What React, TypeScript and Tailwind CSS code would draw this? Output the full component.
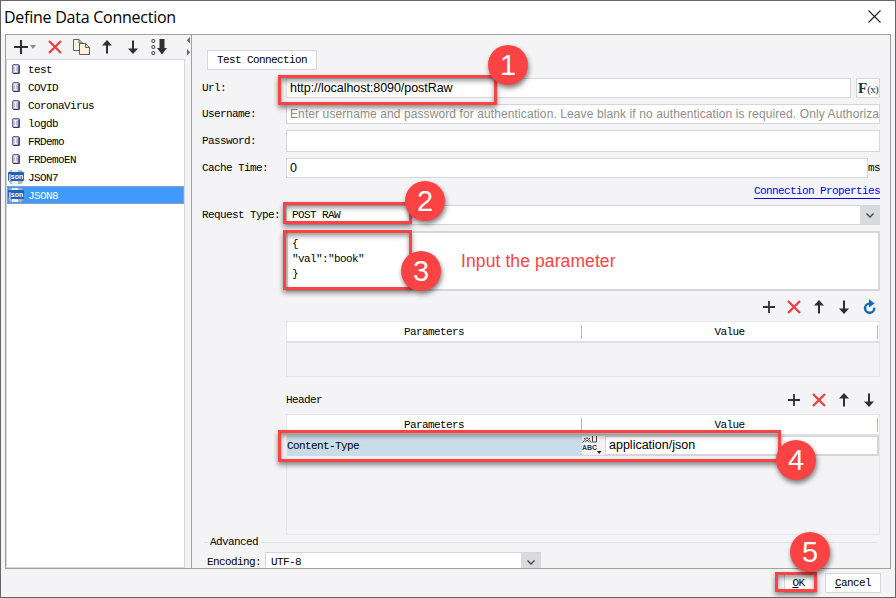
import React from 'react';
import clsx from 'clsx';

const MONO = "font-['Liberation_Mono','Noto_Sans_CJK_SC',monospace] text-[11px] tracking-[-0.6px]";
const ARIAL = "font-['Liberation_Sans',Arial,sans-serif]";

const connections = [
  { name: 'test', type: 'db' },
  { name: 'COVID', type: 'db' },
  { name: 'CoronaVirus', type: 'db' },
  { name: 'logdb', type: 'db' },
  { name: 'FRDemo', type: 'db' },
  { name: 'FRDemoEN', type: 'db' },
  { name: 'JSON7', type: 'json' },
  { name: 'JSON8', type: 'json' }
];

/* Icons */

function PlusIcon({ size = 12 }: { size?: number }) {
  return (
    <svg width={size} height={size} viewBox="0 0 12 12" className="shrink-0">
      <path d="M6 0V12M0 6H12" stroke="#303030" strokeWidth="1.8" />
    </svg>
  );
}

function DeleteIcon() {
  return (
    <svg width="14" height="14" viewBox="0 0 14 14" className="shrink-0">
      <path d="M1 1L13 13M13 1L1 13" stroke="#e8403c" strokeWidth="2.3" />
    </svg>
  );
}

function ArrowIcon({ down = false }: { down?: boolean }) {
  return (
    <svg width="10" height="14" viewBox="0 0 10 14" className={clsx('shrink-0', down && 'rotate-180')}>
      <path d="M5 3V13.5" stroke="#303030" strokeWidth="2" />
      <path d="M5 0L10 5.6H0Z" fill="#303030" />
    </svg>
  );
}

function CopyIcon() {
  return (
    <svg width="17" height="16" viewBox="0 0 17 16" className="shrink-0">
      <path d="M.5 .5H6L9.5 4V11.5H.5Z" fill="#f8f3e4" stroke="#5c5c58" />
      <path d="M6.5 4.5H12.5L16.5 8.5V15.5H6.5Z" fill="#fdf3dc" stroke="#5c5c58" />
      <path d="M12.5 4.5V8.5H16.5M6 .5V4H9.5" fill="none" stroke="#5c5c58" />
    </svg>
  );
}

function SortIcon() {
  return (
    <svg width="16" height="16" viewBox="0 0 16 16" className="shrink-0">
      <g fill="none" stroke="#505050" strokeWidth="1.1">
        <circle cx="2.3" cy="2" r="1.5" />
        <circle cx="2.3" cy="8" r="1.5" />
        <circle cx="2.3" cy="14" r="1.5" />
      </g>
      <path d="M8.5 0H13.5V9H16L11 15.5L6 9H8.5Z" fill="#303030" />
    </svg>
  );
}

function RefreshIcon() {
  return (
    <svg width="13" height="15" viewBox="0 0 13 15" className="shrink-0">
      <path d="M7 4.6H6A4.6 4.6 0 1 0 11.2 8.6" fill="none" stroke="#1369b5" strokeWidth="2.4" />
      <path d="M6 0L11.5 4.4L6 8.6Z" fill="#1369b5" />
    </svg>
  );
}

function DbIcon() {
  return (
    <svg width="8" height="10" viewBox="0 0 8 10">
      <rect x=".5" y=".5" width="7" height="9" rx="1.5" fill="#b9bbd8" stroke="#6c6d8c" />
      <path d="M2 2.5H5M2 7.5H5M3.5 2.5V7.5" stroke="#f4f4ff" />
      <path d="M7 1.5V9.5H1.5" fill="none" stroke="#35365a" strokeWidth="1.2" />
    </svg>
  );
}

function JsonIcon() {
  return (
    <svg width="16" height="16" viewBox="0 0 16 16" className="overflow-visible">
      <rect x="1" y="1" width="14" height="14" rx="3" fill="#b4b6b8" />
      <rect x="4" y="1" width="6" height="14" fill="#eceded" />
      <rect x="0" y="3" width="16" height="9" rx="1" fill="#1765bd" />
      <text x=".8" y="9.7" textLength="14.4" lengthAdjust="spacingAndGlyphs" fontFamily="Liberation Sans" fontWeight="700" fontSize="8" style={{ letterSpacing: 0 }} fill="#fff">json</text>
    </svg>
  );
}

function StringTypeIcon() {
  return (
    <svg width="20" height="18" viewBox="0 0 20 18">
      <path d="M.5 6.5L5 1.5L9.5 6.5M3 6.5L5 4L7 6.5M2 3L3 2M7 2L8 3M10.5 0V6H14.5V0" fill="none" stroke="#444" />
      <text x="0" y="14" textLength="15" lengthAdjust="spacingAndGlyphs" fontFamily="Liberation Sans" fontSize="7.5" fontWeight="700" style={{ letterSpacing: 0 }} fill="#333">ABC</text>
      <path d="M15 15H19.5L17.2 18Z" fill="#222" />
    </svg>
  );
}

function DropButton() {
  return (
    <div className="flex w-5 shrink-0 items-center justify-center bg-[#d8dade]">
      <svg width="8" height="5" viewBox="0 0 8 5">
        <path d="M.5 .5L4 4L7.5 .5" fill="none" stroke="#404040" strokeWidth="1.3" />
      </svg>
    </div>
  );
}

/* Form parts */

interface FieldProps {
  label: string;
  className: string;
  children: React.ReactNode;
}

function Field({ label, className, children }: FieldProps) {
  return (
    <div className={clsx('flex', className)}>
      <div className="flex w-21 shrink-0 items-center">{label}</div>
      {children}
    </div>
  );
}

function TableTools({ refresh = false }: { refresh?: boolean }) {
  return (
    <div className="flex items-center gap-[11px]">
      <div className="flex w-3.5 justify-center"><PlusIcon /></div>
      <DeleteIcon />
      <div className="flex w-3.5 justify-center"><ArrowIcon /></div>
      <div className="flex w-3.5 justify-center"><ArrowIcon down /></div>
      {refresh && <div className="flex w-3.5 justify-center"><RefreshIcon /></div>}
    </div>
  );
}

function TableHead() {
  return (
    <div className="flex h-[21px] shrink-0 items-center border-b-2 border-[#dedfe2] bg-white">
      <div className="w-[294px] pt-0.5 text-center">Parameters</div>
      <div className="h-3.5 w-px bg-[#b8b8ac]" />
      <div className="flex-1 pt-0.5 text-center">Value</div>
      <div className="mr-px h-3.5 w-px bg-[#b8b8ac]" />
    </div>
  );
}

/* Callouts drawn above the dialog */

function Mark({ className }: { className: string }) {
  return (
    <div
      className={clsx(
        'pointer-events-none absolute border-3 border-[#fc4343] shadow-[0_3px_5px_rgba(0,0,0,0.45),inset_0_3px_5px_rgba(0,0,0,0.4)]',
        className
      )}
    />
  );
}

function Badge({ n, className }: { n: number; className: string }) {
  return (
    <div
      className={clsx(
        'absolute flex size-10 items-center justify-center rounded-full bg-[#fc4343] text-[29px] leading-none tracking-normal text-white shadow-[1px_3px_5px_rgba(0,0,0,0.5)]',
        ARIAL,
        className
      )}
    >
      {n}
    </div>
  );
}

function Sidebar() {
  return (
    <aside className="flex w-[179px] shrink-0 flex-col">
      <div className="flex h-6 shrink-0 items-center pl-2">
        <PlusIcon size={14} />
        <svg width="6" height="4" viewBox="0 0 6 4" className="ml-0.5">
          <path d="M0 0H6L3 4Z" fill="#8a8a8a" />
        </svg>
        <div className="ml-3"><DeleteIcon /></div>
        <div className="ml-[11px]"><CopyIcon /></div>
        <div className="ml-3"><ArrowIcon /></div>
        <div className="ml-4"><ArrowIcon down /></div>
        <div className="ml-[13px]"><SortIcon /></div>
      </div>
      <ul className="flex-1 border border-[#d5d6da] bg-white">
        {connections.map((c, i) => (
          <li
            key={c.name}
            className={clsx(
              'flex h-[18px] items-center',
              i === connections.length - 1 && 'border border-[#8d9ac8] bg-[#3f9bfb] text-white'
            )}
          >
            <span className={clsx('flex w-[21px] shrink-0', c.type === 'db' ? 'pl-[5px]' : 'pl-px', i === 7 && '-ml-px')}>
              {c.type === 'db' ? <DbIcon /> : <JsonIcon />}
            </span>
            <span className="pt-0.5">{c.name}</span>
          </li>
        ))}
      </ul>
    </aside>
  );
}

function ConnectionForm() {
  return (
    <main className="flex min-w-0 flex-1 flex-col overflow-hidden pr-2.5 pl-2.5">
      <button className="mt-[15px] ml-[5px] h-5 w-[110px] shrink-0 border border-[#d5d6da] bg-white">Test Connection</button>

      <Field label="Url:" className="mt-2 h-5 shrink-0">
        <div className={clsx('flex w-[565px] items-center border border-[#d5d6da] bg-white pl-[3px] text-[12.5px] tracking-[-0.05px]', ARIAL)}>
          http://localhost:8090/postRaw
        </div>
        <div className="ml-[5px] flex w-6 items-center justify-center border border-[#d5d6da] bg-white font-['Liberation_Serif',serif] text-[15px] font-bold tracking-normal text-[#303030]">
          F<span className="pt-0.5 text-[11px] font-normal tracking-[-0.7px]">(x)</span>
        </div>
      </Field>
      <Field label="Username:" className="mt-1.5 h-5 shrink-0">
        <div className={clsx('flex min-w-0 flex-1 items-center border border-[#d5d6da] bg-white pl-[3px] text-[12px] tracking-[0.1px] whitespace-nowrap text-[#8e8e8a]', ARIAL)}>
          Enter username and password for authentication. Leave blank if no authentication is required. Only Authoriza
        </div>
      </Field>
      <Field label="Password:" className="mt-1.5 h-[22px] shrink-0">
        <div className="flex-1 border border-[#d5d6da] bg-white" />
      </Field>
      <Field label="Cache Time:" className="mt-1.5 h-5 shrink-0">
        <div className={clsx('flex w-[582px] items-center border border-[#d5d6da] bg-white pl-[3px] text-[12.5px]', ARIAL)}>0</div>
        <div className="flex items-center">ms</div>
      </Field>

      <div className="mt-[7px] flex h-3.5 shrink-0 justify-end">
        <a className="border-b border-[#0000ee] leading-[13px] text-[#0000ee]">Connection Properties</a>
      </div>

      <Field label="Request Type:" className="mt-1.5 h-5 shrink-0">
        <div className="flex flex-1 border border-r-0 border-[#d5d6da] bg-white">
          <div className="flex flex-1 items-center pl-[5px]">POST RAW</div>
          <DropButton />
        </div>
      </Field>
      <pre className={clsx('mt-1.5 ml-21 h-[60px] shrink-0 border-2 border-[#d5d6da] bg-white pt-1 pl-1 leading-[15px]', MONO)}>
        {'{\n"val":"book"\n}'}
      </pre>

      <div className="mt-2 flex h-[15px] shrink-0 items-center justify-end pr-1">
        <TableTools refresh />
      </div>
      <div className="mt-[7px] ml-21 h-14 shrink-0 border border-[#e5e6e9]">
        <TableHead />
      </div>

      <div className="mt-[15px] ml-21 flex h-[15px] shrink-0 items-center justify-between pr-1">
        <span className="pt-px">Header</span>
        <TableTools />
      </div>
      <div className="mt-[7px] ml-21 h-[121px] shrink-0 border border-[#e5e6e9]">
        <TableHead />
        <div className="flex h-5">
          <div className="flex w-[295px] items-center bg-[#c8dcea]">Content-Type</div>
          <div className="w-[23px] border-b border-[#d5d6da]"><StringTypeIcon /></div>
          <div className={clsx('flex flex-1 items-center border border-r-2 border-b-2 border-[#d5d6da] bg-white pl-[3px] text-[12.5px] tracking-normal', ARIAL)}>
            application/json
          </div>
        </div>
      </div>

      <div className="mt-px mb-px ml-0.5 flex h-3 shrink-0 items-center">
        <div className="h-px w-1 bg-[#e1e2e5]" />
        <span className="pr-[3px] pl-0.5">Advanced</span>
        <div className="mr-0.5 h-px flex-1 bg-[#e1e2e5]" />
      </div>
      <div className="mt-[3px] ml-[5px] flex h-5 shrink-0">
        <div className="flex w-[58px] items-center">Encoding:</div>
        <div className="flex w-[276px] border border-r-0 border-[#d5d6da] bg-white">
          <div className="flex flex-1 items-center pl-[5px]">UTF-8</div>
          <DropButton />
        </div>
      </div>
    </main>
  );
}

export default function App() {
  return (
    <div className={clsx('relative flex h-[598px] w-[896px] flex-col overflow-hidden border border-[#666668] bg-[#f4f4f7] text-black', MONO)}>
      {/* Title bar */}
      <header className="flex h-[33px] shrink-0 items-center justify-between bg-white pr-3.5 pl-[3px]">
        <h1 className="pb-0.5 font-['Open_Sans','Noto_Sans',sans-serif] text-[16px] tracking-[-0.25px]">Define Data Connection</h1>
        <svg width="13" height="13" viewBox="0 0 13 13" className="mb-0.5">
          <path d="M.5 .5L12.5 12.5M12.5 .5L.5 12.5" stroke="#222" strokeWidth="1.2" />
        </svg>
      </header>

      <div className="mx-1 flex h-[535px] shrink-0 border border-[#a3a298]">
        <Sidebar />
        <div className="w-1.5 shrink-0">
          <svg width="6" height="21" viewBox="0 0 6 21">
            <path d="M5 2V8.5L1.8 5.2Z M2 14V20.5L5.2 17.2Z" fill="#666" />
          </svg>
        </div>
        <div className="w-px shrink-0 bg-[#a0a0a4]" />
        <ConnectionForm />
      </div>

      <footer className="mt-1 flex h-5 shrink-0 justify-end gap-2 pr-3.5">
        <button className="w-[33px] border border-[#d5d6da] bg-white pr-1"><span className="underline">O</span>K</button>
        <button className="w-14 border border-[#d5d6da] bg-white"><span className="underline">C</span>ancel</button>
      </footer>

      {/* Step annotations */}
      <Mark className="top-[74px] left-[277px] h-[30px] w-[219px]" />
      <Mark className="top-[201px] left-[282px] h-[22px] w-[129px]" />
      <Mark className="top-[229px] left-[282px] h-[60px] w-[129px]" />
      <Mark className="top-[429px] left-[277px] h-8 w-[503px]" />
      <Mark className="top-[571px] left-[774px] h-5 w-[42px]" />
      <Badge n={1} className="top-[44px] left-[487px]" />
      <Badge n={2} className="top-[180px] left-[404px]" />
      <Badge n={3} className="top-[250px] left-[400px]" />
      <Badge n={4} className="top-[439px] left-[775px]" />
      <Badge n={5} className="top-[531px] left-[789px]" />
      <div className={clsx('absolute top-[248px] left-[460px] text-[17.5px] leading-6 tracking-[0.1px] text-[#fc4343]', ARIAL)}>
        Input the parameter
      </div>
    </div>
  );
}
